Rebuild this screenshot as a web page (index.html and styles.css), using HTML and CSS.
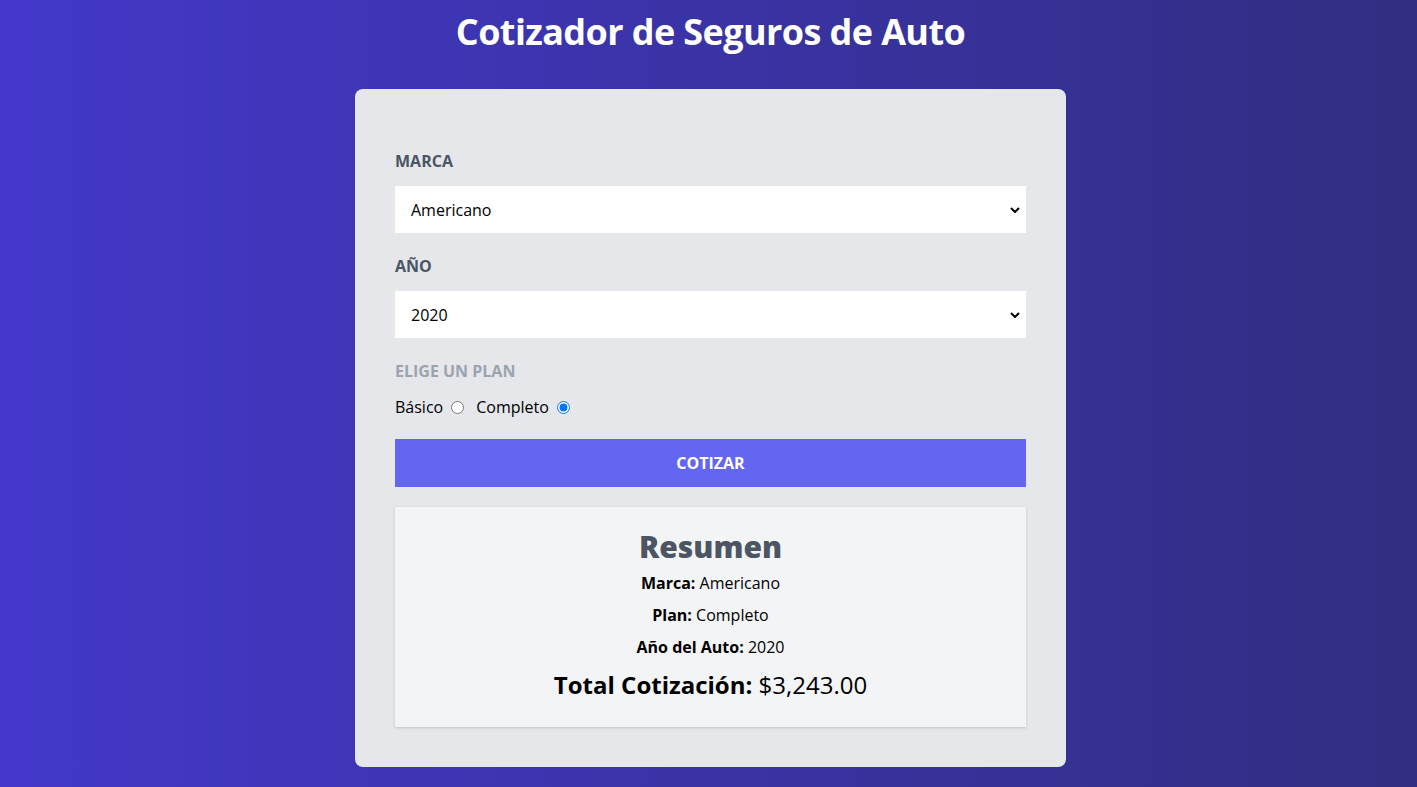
FILE: index.html
```html
<!doctype html>
<html lang="es">
<head>
<meta charset="utf-8">
<title>Cotizador de Seguros de Auto</title>
<link rel="stylesheet" href="styles.css">
</head>
<body>

<header class="site-header">
  <h1>Cotizador de Seguros de Auto</h1>
</header>

<main class="card">
  <form class="quote-form">
    <div class="field">
      <label class="field-label" for="marca">Marca</label>
      <select id="marca" class="field-select">
        <option>Americano</option>
        <option>Europeo</option>
        <option>Asiatico</option>
      </select>
    </div>

    <div class="field">
      <label class="field-label" for="year">Año</label>
      <select id="year" class="field-select">
        <option>2020</option>
        <option>2019</option>
        <option>2018</option>
      </select>
    </div>

    <div class="field">
      <span class="field-label field-label--muted">Elige un plan</span>
      <div class="plans">
        <label for="basico">Básico</label>
        <input type="radio" name="plan" id="basico" value="basico">
        <label for="completo">Completo</label>
        <input type="radio" name="plan" id="completo" value="completo" checked>
      </div>
    </div>

    <button type="button" class="submit">Cotizar</button>
  </form>

  <section class="summary">
    <h2>Resumen</h2>
    <p><strong>Marca:</strong> Americano</p>
    <p><strong>Plan:</strong> Completo</p>
    <p><strong>Año del Auto:</strong> 2020</p>
    <p class="total"><strong>Total Cotización:</strong> $3,243.00</p>
  </section>
</main>

</body>
</html>
```

FILE: styles.css
```css
* {
  box-sizing: border-box;
}

body {
  margin: 0;
  padding-left: 4px;
  min-height: 100vh;
  font-family: "Open Sans", "Noto Sans", sans-serif;
  font-size: 16px;
  line-height: 24px;
  color: #000;
  background-image: linear-gradient(to right, #4338ca, #312e81);
}

.site-header h1 {
  margin: 0;
  padding-top: 12px;
  font-size: 36px;
  line-height: 40px;
  font-weight: 700;
  letter-spacing: -0.6px;
  color: #fff;
  text-align: center;
}

.card {
  width: 711px;
  margin: 37px auto 0;
  padding: 60px 40px 40px;
  background: #e5e7eb;
  border-radius: 8px;
}

.quote-form {
  display: flex;
  flex-direction: column;
}

.field + .field {
  margin-top: 21px;
}

.field-label {
  display: block;
  margin-bottom: 13px;
  font-weight: 700;
  text-transform: uppercase;
  color: #4b5563;
}

.field-label--muted {
  margin-bottom: 12px;
  color: #9ca3af;
}

.field-select {
  display: block;
  width: 100%;
  height: 47px;
  padding: 0 16px;
  border: none;
  border-radius: 0;
  font: inherit;
  color: #000;
  background: #fff url("data:image/svg+xml,%3Csvg xmlns='http://www.w3.org/2000/svg' width='10' height='6' viewBox='0 0 10 6'%3E%3Cpath d='M1 1l4 4 4-4' fill='none' stroke='%23000' stroke-width='2'/%3E%3C/svg%3E") no-repeat right 6px center;
  appearance: none;
  -webkit-appearance: none;
}

.plans {
  display: flex;
  align-items: center;
}

.plans input {
  width: 13px;
  height: 13px;
  margin: 0 12px 0 8px;
}

.submit {
  margin-top: 20px;
  height: 48px;
  border: none;
  background: #6366f1;
  color: #fff;
  font: inherit;
  font-weight: 700;
  text-transform: uppercase;
  cursor: pointer;
}

.summary {
  margin-top: 20px;
  padding: 22px 20px 26px;
  background: #f3f4f6;
  box-shadow: 0 1px 3px rgba(0, 0, 0, .1), 0 1px 2px rgba(0, 0, 0, .06);
  text-align: center;
}

.summary h2 {
  margin: 0;
  font-size: 30px;
  line-height: 36px;
  font-weight: 800;
  color: #4b5563;
}

.summary p {
  margin: 8px 0 0;
}

.summary h2 + p {
  margin-top: 6px;
}

.summary .total {
  margin-top: 10px;
  font-size: 24px;
  line-height: 32px;
}
```
